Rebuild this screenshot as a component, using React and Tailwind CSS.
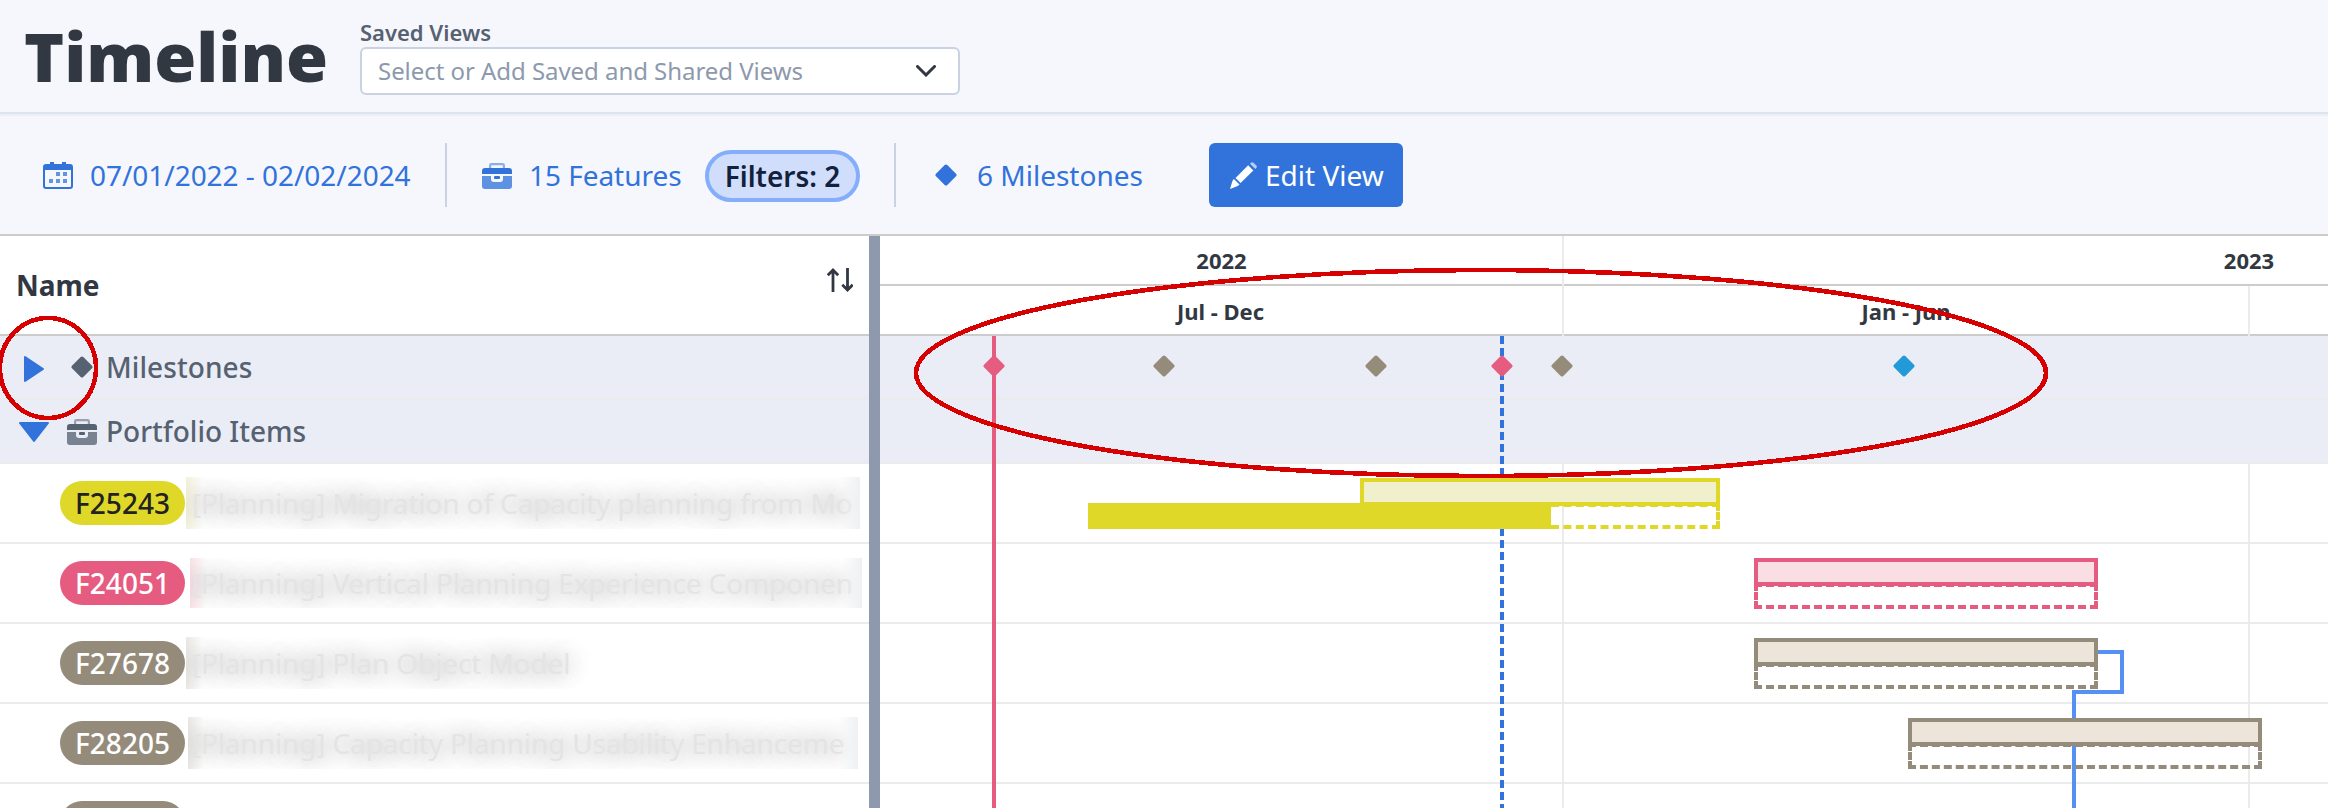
const features = [
  {
    id: 'F25243',
    title: '[Planning] Migration of Capacity planning from Mo',
    pill: 'bg-[#dfd829] text-[#222222]',
    blur: 'ml-px h-[52px] w-[674px] pl-[6px] from-[#f3f2dc]',
    planned: { left: 480, width: 360, style: 'border-[#dfd829] bg-[#f1f0cd]' },
    done: { left: 208, width: 463 },
    actual: { left: 671, width: 169, style: 'border-[#dfd829] border-l-0' },
  },
  {
    id: 'F24051',
    title: '[Planning] Vertical Planning Experience Componen',
    pill: 'bg-[#e65b80] text-white',
    blur: 'ml-[5px] h-[50px] w-[672px] pl-[2px] from-[#fae3e8]',
    planned: { left: 874, width: 344, style: 'border-[#e65b80] bg-[#fbdde4]' },
    actual: { left: 874, width: 344, style: 'border-[#e65b80]' },
  },
  {
    id: 'F27678',
    title: '[Planning] Plan Object Model',
    pill: 'bg-[#958b7a] text-white',
    blur: 'ml-px h-[52px] w-[468px] pl-[6px] from-[#e9e8e5]',
    fades: true,
    planned: { left: 874, width: 344, style: 'border-[#958b7a] bg-[#ece5da]' },
    actual: { left: 874, width: 344, style: 'border-[#958b7a]' },
  },
  {
    id: 'F28205',
    title: '[Planning] Capacity Planning Usability Enhanceme',
    pill: 'bg-[#958b7a] text-white',
    blur: 'ml-[3px] h-[52px] w-[670px] pl-[4px] from-[#e9e8e5]',
    planned: { left: 1028, width: 354, style: 'border-[#958b7a] bg-[#ede5da]' },
    actual: { left: 1028, width: 354, style: 'border-[#958b7a]' },
  },
]

const milestones = [
  { left: 114, color: 'text-[#e65b80]' },
  { left: 284, color: 'text-[#958b7a]' },
  { left: 496, color: 'text-[#958b7a]' },
  { left: 622, color: 'text-[#e65b80]' },
  { left: 682, color: 'text-[#958b7a]' },
  { left: 1024, color: 'text-[#2499d8]' },
]

function Diamond({ className = '' }) {
  return (
    <svg viewBox="0 0 22 22" className={`h-[22px] w-[22px] shrink-0 ${className}`} fill="currentColor">
      <path d="M9.7 1 1 9.7a1.9 1.9 0 0 0 0 2.6L9.7 21a1.9 1.9 0 0 0 2.6 0L21 12.3a1.9 1.9 0 0 0 0-2.6L12.3 1a1.9 1.9 0 0 0-2.6 0Z" />
    </svg>
  )
}

function Briefcase({ className = '' }) {
  return (
    <svg viewBox="0 0 30 26" className={`h-[26px] w-[30px] shrink-0 ${className}`} fill="currentColor">
      <path opacity=".55" d="M7 5V2.4A2.4 2.4 0 0 1 9.4 0h11.2A2.4 2.4 0 0 1 23 2.4V5h-2.2V2.2H9.2V5Z" />
      <path d="M0 11V8a3 3 0 0 1 3-3h24a3 3 0 0 1 3 3v3Z" />
      <path opacity=".77" d="M0 13h9v3.6A2.4 2.4 0 0 0 11.4 19h7.2A2.4 2.4 0 0 0 21 16.6V13h9v10.6a2.4 2.4 0 0 1-2.4 2.4H2.4A2.4 2.4 0 0 1 0 23.6Z" />
      <rect x="12" y="13" width="6" height="3" rx="1" />
    </svg>
  )
}

function Calendar() {
  return (
    <svg viewBox="0 0 30 27" className="h-[27px] w-[30px] shrink-0" fill="currentColor">
      <path d="M7 0h4v2h8V0h4v2h4a3 3 0 0 1 3 3v19a3 3 0 0 1-3 3H3a3 3 0 0 1-3-3V5a3 3 0 0 1 3-3h4ZM2 8v16a1 1 0 0 0 1 1h24a1 1 0 0 0 1-1V8Z" />
      <g opacity=".75">
        <rect x="13" y="10" width="4" height="4" />
        <rect x="20" y="10" width="4" height="4" />
        <rect x="6" y="17" width="4" height="4" />
        <rect x="13" y="17" width="4" height="4" />
        <rect x="20" y="17" width="4" height="4" />
      </g>
    </svg>
  )
}

function Pencil() {
  return (
    <svg viewBox="0 0 27 27" className="h-[27px] w-[27px] shrink-0" fill="currentColor">
      <path opacity=".65" d="m20 1.700.8-.8a2 2 0 0 1 2.900 0l2.400 2.400a2 2 0 0 1 0 2.900l-.8.8Z" />
      <path d="m18.200 3.300 5.100 5.100L10.600 21l-5.100-5.100Z" />
      <path d="m2.500 18.800 1.400-1.800 5.600 5.400-1.800 1.500L0 27Z" />
    </svg>
  )
}

function Toolbar() {
  return (
    <div className="flex h-[122px] items-center border-b-2 border-[#cccccc] pl-[43px] pt-0.5 text-[28px] leading-none text-[#3173da]">
      <Calendar />
      <span className="ml-[17px] w-[355px] whitespace-nowrap tracking-[-0.04px]">07/01/2022 - 02/02/2024</span>
      <div className="h-16 w-0.5 bg-[#c8d2e2]" />
      <Briefcase className="ml-[35px] mt-0.5" />
      <span className="ml-[17px] w-[176px] whitespace-nowrap tracking-[-0.04px]">15 Features</span>
      <div className="mt-0.5 flex h-[52px] w-[155px] items-center justify-center whitespace-nowrap rounded-full border-4 border-[#84aefb] bg-[#d0defc] font-semibold text-[#12213d]">
        Filters: 2
      </div>
      <div className="ml-[34px] h-16 w-0.5 bg-[#c8d2e2]" />
      <Diamond className="ml-[39px]" />
      <span className="ml-5 w-[232px] whitespace-nowrap">6 Milestones</span>
      <button type="button" className="flex h-16 w-[194px] items-center rounded-[6px] bg-[#3173da] pl-[21px] text-white">
        <Pencil />
        <span className="ml-2 whitespace-nowrap">Edit View</span>
      </button>
    </div>
  )
}

function FeatureName({ feature }) {
  return (
    <div className="flex h-20 items-center border-b-2 border-[#ebebeb] pl-[60px]">
      <div className={`flex h-11 w-[125px] shrink-0 items-center justify-center rounded-full text-[28px] font-medium leading-none ${feature.pill}`}>
        {feature.id}
      </div>
      <div
        className={`relative flex items-center overflow-hidden whitespace-nowrap bg-gradient-to-r to-transparent to-[16px] text-[28px] leading-none tracking-[-0.13px] text-[#e4e4e4] [text-shadow:0_0_22px_rgba(0,0,0,0.26),0_0_28px_rgba(0,0,0,0.26)] ${feature.blur}`}
      >
        {feature.title}
        {!feature.fades && <div className="absolute inset-y-0 right-0 w-5 bg-gradient-to-l from-[#eef0f2] to-transparent" />}
      </div>
    </div>
  )
}

function NameColumn() {
  return (
    <div className="w-[869px] shrink-0 bg-white">
      <div className="flex h-[100px] justify-between border-b-2 border-[#cccccc] pl-4 pr-4 text-[#323842]">
        <span className="mt-[35px] text-[28px] font-bold leading-[28px]">Name</span>
        <svg viewBox="0 0 26 24" className="mt-8 h-6 w-[26px]" fill="none" stroke="currentColor" strokeWidth="2.8">
          <path d="M6 24V2M.8 7.2 6 2l5.2 5.2M20.5 0v22m-5.2-5.2 5.2 5.2 5.2-5.2" />
        </svg>
      </div>
      <div className="flex h-16 items-center border-b-2 border-[#ebebeb] bg-[#eaedf6] text-[28px] font-medium leading-none text-[#566171]">
        <svg viewBox="0 0 20 26" className="ml-6 mt-[3px] h-[26px] w-5 text-[#3173da]" fill="currentColor" stroke="currentColor" strokeWidth="2" strokeLinejoin="round">
          <path d="M1 1v24l18-12Z" />
        </svg>
        <Diamond className="ml-[27px]" />
        <span className="ml-[13px] tracking-[0.08px]">Milestones</span>
      </div>
      <div className="flex h-16 items-center border-b-2 border-[#ebebeb] bg-[#eaedf6] text-[28px] font-medium leading-none text-[#566171]">
        <svg viewBox="0 0 30 20" className="ml-[19px] mt-0.5 h-5 w-[30px] text-[#3173da]" fill="currentColor" stroke="currentColor" strokeWidth="2" strokeLinejoin="round">
          <path d="M1 1h28L15 19Z" />
        </svg>
        <Briefcase className="ml-[18px] mt-0.5" />
        <span className="ml-[9px]">Portfolio Items</span>
      </div>
      {features.map((f) => (
        <FeatureName key={f.id} feature={f} />
      ))}
      <div className="pl-[60px] pt-[17px]">
        <div className="h-11 w-[125px] rounded-full bg-[#958b7a]" />
      </div>
    </div>
  )
}

function ChartHeader() {
  return (
    <div className="relative h-[100px] w-[2058px] text-[22px] font-bold leading-none text-[#323842]">
      <div className="flex h-[50px] border-b-2 border-[#cccccc] text-center">
        <div className="w-[683px] pt-[13px]">2022</div>
        <div className="w-[1372px] pt-[13px]">2023</div>
      </div>
      <div className="flex h-[50px] border-b-2 border-[#cccccc] text-center">
        <div className="w-[681px] pt-[14px]">Jul - Dec</div>
        <div className="w-[690px] pt-[14px]">Jan - Jun</div>
      </div>
      <div className="absolute left-[682px] top-0 h-full w-0.5 bg-[#ebebeb]" />
      <div className="absolute bottom-0 left-[1368px] h-[50px] w-0.5 bg-[#ebebeb]" />
    </div>
  )
}

function Chart() {
  return (
    <div className="relative min-w-0 grow overflow-hidden bg-white">
      <ChartHeader />
      <div className="h-16 border-b-2 border-[#ebebeb] bg-[#eaedf6]" />
      <div className="h-16 border-b-2 border-[#ebebeb] bg-[#eaedf6]" />

      {/* over the row borders, under the bars */}
      <div className="absolute bottom-0 left-[682px] top-[228px] w-0.5 bg-[#ebebeb]" />
      <div className="absolute bottom-0 left-[1368px] top-[228px] w-0.5 bg-[#ebebeb]" />
      <div className="absolute bottom-0 left-[112px] top-[100px] z-[5] w-1 bg-[#e65b80]" />
      <svg className="absolute left-0 top-0 z-[5] h-[572px] w-[1448px]" fill="none" strokeWidth="4">
        <path d="M622 100V572" stroke="#3173da" strokeDasharray="8 4" />
        <path d="M1218 416h24v40h-48v116" stroke="#5790f3" />
      </svg>

      {features.map((f) => (
        <div key={f.id} className="relative h-20 border-b-2 border-[#ebebeb]">
          {f.done && (
            <div className="absolute top-[39px] z-10 h-[26px] bg-[#dfd829]" style={{ left: f.done.left, width: f.done.width }} />
          )}
          <div
            className={`absolute top-[39px] z-10 h-[26px] border-4 border-dashed ${f.actual.style}`}
            style={{ left: f.actual.left, width: f.actual.width }}
          />
          <div
            className={`absolute top-[14px] z-10 h-7 border-4 ${f.planned.style}`}
            style={{ left: f.planned.left, width: f.planned.width }}
          />
        </div>
      ))}

      {milestones.map((m) => (
        <div key={m.left} className={`absolute top-[119px] z-10 -ml-[11px] ${m.color}`} style={{ left: m.left }}>
          <Diamond />
        </div>
      ))}
    </div>
  )
}

export default function App() {
  return (
    <div className="relative flex h-[808px] w-[2328px] flex-col overflow-hidden bg-[#f6f7fc] font-['Noto_Sans',sans-serif]">
      <header className="flex h-[114px] shrink-0 border-b-2 border-[#dce4ef] pl-6 shadow-[0_2px_0_#ebf0f7]">
        <h1 className="mt-[20px] w-[336px] text-[68px] font-black leading-[72px] text-[#323842]">Timeline</h1>
        <div className="pt-[19px]">
          <div className="h-7 text-[22px] font-semibold leading-[26px] text-[#566171]">Saved Views</div>
          <div className="flex h-12 w-[600px] items-center justify-between rounded-[6px] border-2 border-[#c8d2e2] bg-white pl-4 pr-[22px] text-[24px] leading-none tracking-[-0.05px] text-[#8d99ad]">
            <span className="whitespace-nowrap">Select or Add Saved and Shared Views</span>
            <svg viewBox="0 0 20 12" className="h-3 w-5 text-[#323842]" fill="none" stroke="currentColor" strokeWidth="3" strokeLinecap="round">
              <path d="m1.5 1.5 8.5 8.5 8.5-8.5" />
            </svg>
          </div>
        </div>
      </header>
      <Toolbar />
      <div className="flex h-[572px]">
        <NameColumn />
        <div className="w-[11px] shrink-0 bg-[#8e99ad]" />
        <Chart />
      </div>

      <svg className="pointer-events-none absolute inset-0 z-20 h-full w-full" fill="none" stroke="#d60000" strokeWidth="4.6" shapeRendering="crispEdges">
        <ellipse cx="48" cy="368" rx="48" ry="50" />
        <ellipse cx="1481" cy="373" rx="565" ry="103" />
      </svg>
    </div>
  )
}
